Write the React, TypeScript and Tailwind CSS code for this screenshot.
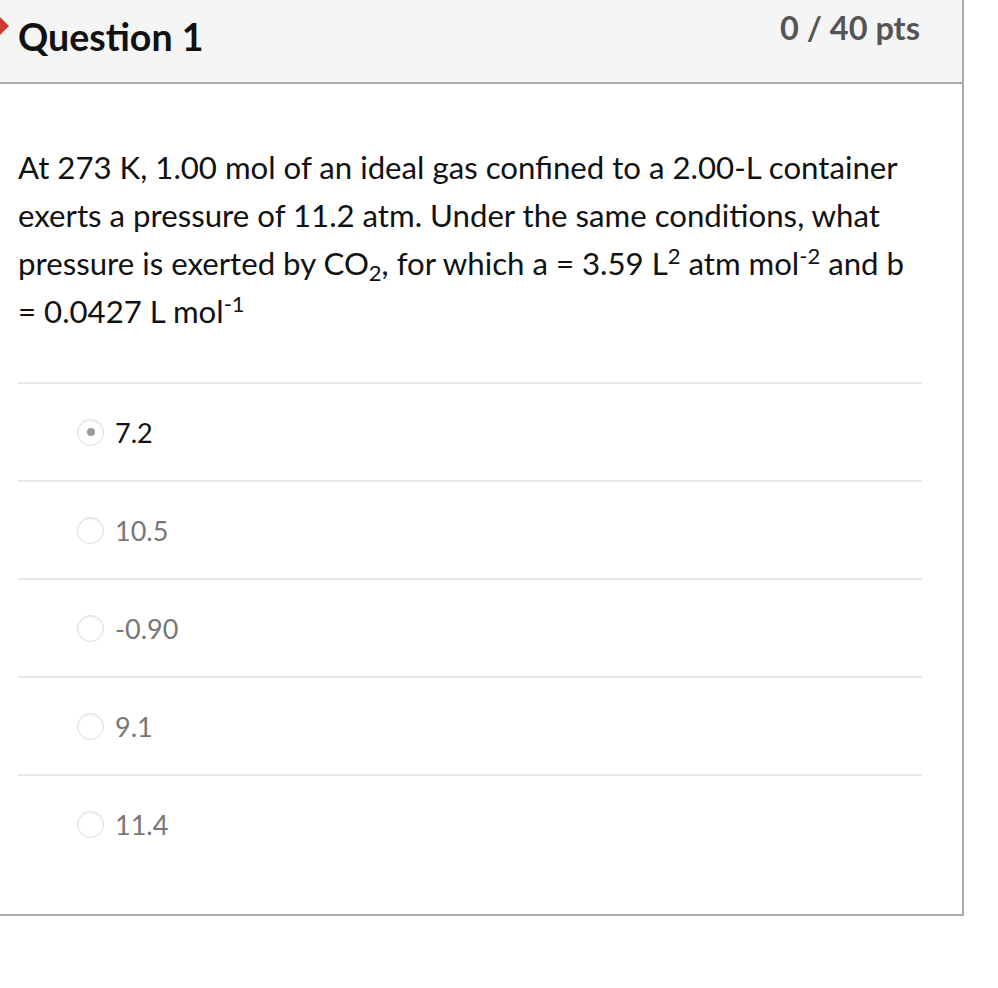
import React from "react";

const options = ["7.2", "10.5", "-0.90", "9.1", "11.4"];

function Radio({ checked }: { checked: boolean }) {
  return (
    <span className="relative flex h-[27px] w-[27px] shrink-0 items-center justify-center rounded-full border border-[#dcdcdc] bg-white shadow-[inset_0_1px_2px_rgba(0,0,0,0.08)]">
      {checked && <span className="h-[8px] w-[8px] rounded-full bg-[#9a9a9a]" />}
    </span>
  );
}

function Sup({ children }: { children: React.ReactNode }) {
  return <sup className="text-[22px] leading-[0]">{children}</sup>;
}

export default function App() {
  return (
    <div className="min-h-[988px] w-[998px] bg-white" style={{ fontFamily: "Lato, 'Noto Sans', sans-serif" }}>
      <div className="relative w-[964px] border-r-2 border-b-2 border-[#aaaaaa] bg-white">
        <div className="relative flex h-[84px] items-start justify-between border-b-2 border-[#aaaaaa] bg-[#f5f5f5] pl-[18px] pr-[42px]">
          <svg className="absolute left-0 top-[15px]" width="10" height="22" viewBox="0 0 10 22">
            <polygon points="-2,0 9,11 -2,22" fill="#cf3a30" />
          </svg>
          <h2 className="mt-[14px] text-[37.5px] font-bold leading-[46px] text-[#111]">Question 1</h2>
          <div className="mt-[7px] text-[32.5px] font-bold leading-[42px] text-[#555]">0 / 40 pts</div>
        </div>
        <div className="px-[18px] pb-[42px] pr-[40px] pt-[59px]">
          <p className="text-[31.2px] leading-[48px] text-[#111]">
            At 273 K, 1.00 mol of an ideal gas confined to a 2.00-L container exerts a pressure of 11.2 atm. Under the same
            conditions, what pressure is exerted by CO<sub className="text-[22px] leading-[0]">2</sub>, for which a = 3.59 L
            <Sup>2</Sup> atm mol<Sup>-2</Sup> and b = 0.0427 L mol<Sup>-1</Sup>
          </p>
          <div className="mt-[47px]">
            {options.map((o, i) => (
              <div key={o} className="flex h-[98px] items-center gap-[11px] border-t-2 border-[#e8e8e8] pl-[59px]">
                <Radio checked={i === 0} />
                <span className={`text-[27px] leading-none ${i === 0 ? "text-[#111]" : "text-[#777]"}`}>{o}</span>
              </div>
            ))}
          </div>
        </div>
      </div>
    </div>
  );
}
